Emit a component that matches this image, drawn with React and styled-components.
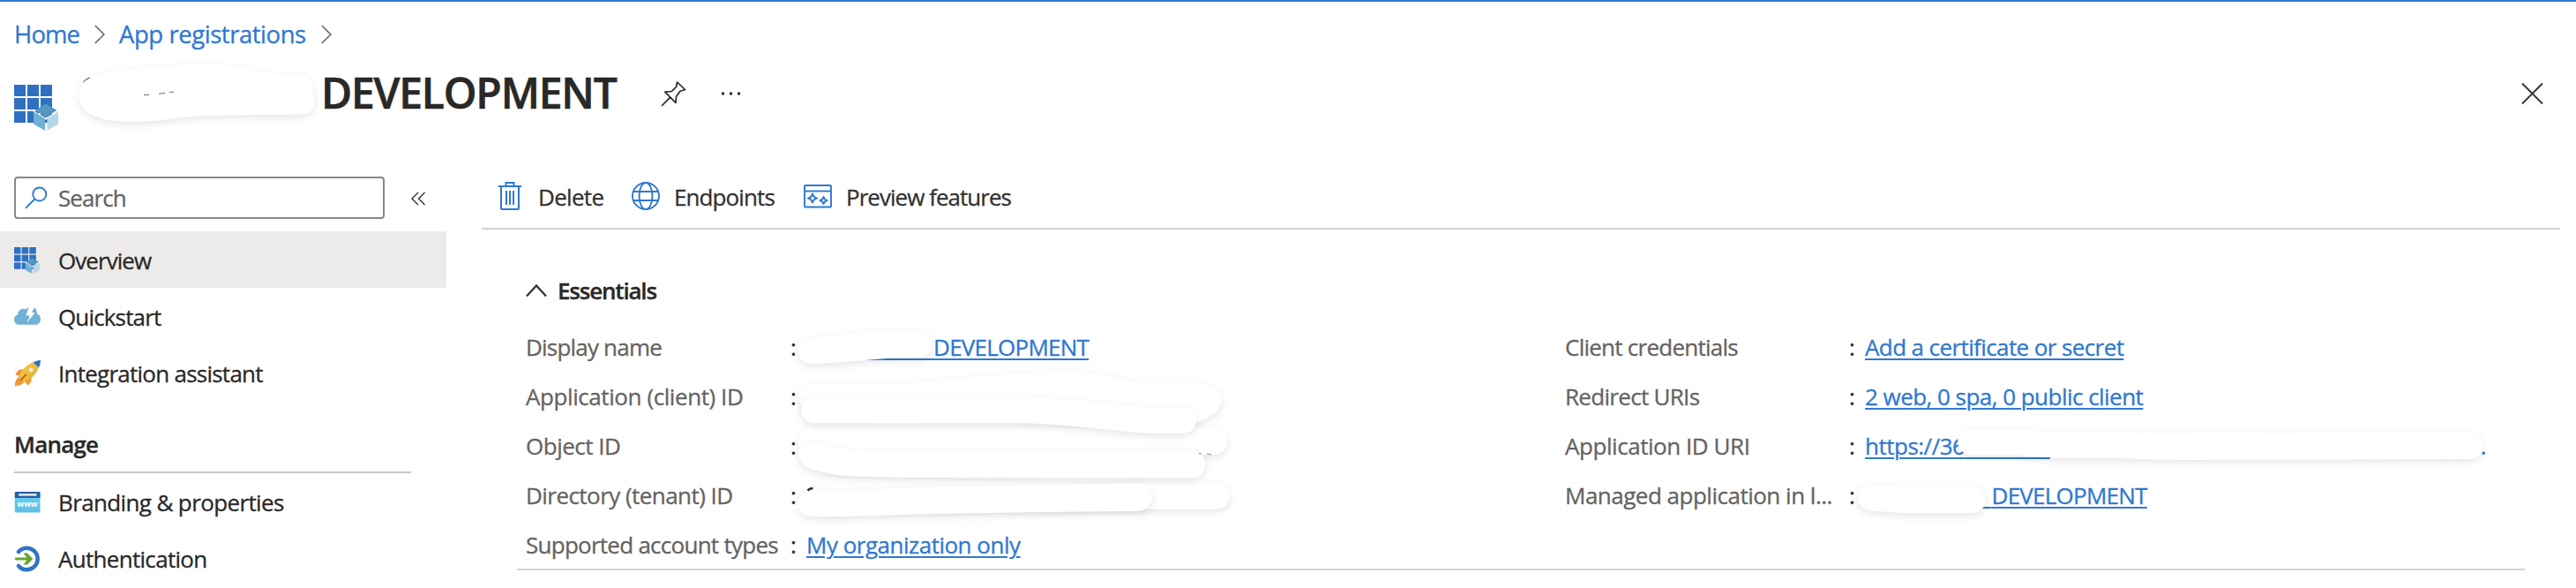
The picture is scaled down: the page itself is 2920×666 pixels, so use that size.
import React from "react";
import styled, { createGlobalStyle } from "styled-components";

const GlobalStyle = createGlobalStyle`
  * { box-sizing: border-box; }
  body {
    margin: 0;
    background: #fff;
    color: #292827;
    font-family: "Open Sans", "Noto Sans", sans-serif;
    font-size: 26px;
    line-height: 36px;
    -webkit-text-stroke: 0.3px currentColor;
  }
  svg { -webkit-text-stroke: 0; }
`;

const BLUE = "#2f78d0";

const Page = styled.div`
  position: relative;
  width: 2920px;
  height: 666px;
  overflow: hidden;
  border-top: 2px solid ${BLUE};
  white-space: nowrap;
`;

const Label = styled.span`
  letter-spacing: ${(p) => p.$ls ?? -0.5}px;
`;

const Breadcrumb = styled.nav`
  display: flex;
  align-items: center;
  height: 70px;
  padding: 4px 0 0 16px;
  color: ${BLUE};
  font-size: 27.5px;
`;

const Crumb = styled.a`
  width: ${(p) => p.$w}px;
  letter-spacing: ${(p) => p.$ls}px;
`;

const CrumbArrow = styled.svg`
  width: 12px;
  height: 22px;
  margin-right: ${(p) => p.$gap ?? 0}px;
`;

const TitleBar = styled.header`
  display: flex;
  height: 128px;
  padding-left: 16px;
`;

const ResourceIcon = styled.svg`
  width: ${(p) => p.$size}px;
  height: ${(p) => p.$size}px;
  margin-top: ${(p) => p.$top ?? 0}px;
`;

const Title = styled.h1`
  width: 337px;
  margin: 0 0 0 296px;
  font-size: 48px;
  line-height: 66px;
  font-weight: 600;
  letter-spacing: ${(p) => p.$ls}px;
  -webkit-text-stroke: 0.6px currentColor;
`;

const TitleAction = styled.svg`
  width: ${(p) => p.$w}px;
  height: 30px;
  margin: 19px 0 0 ${(p) => p.$left}px;
`;

const CloseButton = styled.svg`
  width: 26px;
  height: 26px;
  margin: 21px 37px 0 auto;
`;

const Body = styled.div`
  display: flex;
`;

const Sidebar = styled.aside`
  width: 506px;
  flex: none;
`;

const SearchRow = styled.div`
  display: flex;
  align-items: center;
  height: 48px;
  margin-bottom: 14px;
  padding-left: 16px;
`;

const SearchBox = styled.div`
  display: flex;
  align-items: center;
  width: 420px;
  height: 48px;
  padding-left: 10px;
  border: 2px solid #8a8886;
  border-radius: 4px;
  color: #646362;
  svg { width: 26px; height: 26px; margin-right: 12px; }
`;

const Collapse = styled.svg`
  width: 18px;
  height: 18px;
  margin: 2px 0 0 29px;
`;

const NavItem = styled.div`
  display: flex;
  align-items: center;
  height: 64px;
  padding: 2px 0 0 16px;
  background: ${(p) => (p.$active ? "#edebea" : "transparent")};
  svg { width: 30px; height: 30px; margin: 0 20px 0 0; flex: none; }
`;

const NavHeading = styled.div`
  height: 82px;
  width: 450px;
  margin-left: 16px;
  padding-top: 31px;
  border-bottom: 2px solid #c8c8c8;
  font-weight: 600;
`;

const Content = styled.main`
  width: 2356px;
  margin-left: 40px;
`;

const Toolbar = styled.div`
  display: flex;
  align-items: center;
  height: 60px;
  padding: 0 0 14px 18px;
  border-bottom: 2px solid #d2d2d2;
  color: #323130;
`;

const Command = styled.div`
  display: flex;
  align-items: center;
  width: ${(p) => p.$w}px;
  svg { width: 34px; height: 34px; margin-right: ${(p) => p.$gap}px; flex: none; }
  span { padding-top: 2px; }
`;

const Essentials = styled.section`
  width: 2276px;
  height: 386px;
  margin-left: 40px;
  padding-top: 49px;
  border-bottom: 2px solid #d4d4d4;
`;

const EssentialsHeader = styled.div`
  display: flex;
  align-items: center;
  height: 40px;
  margin-bottom: 16px;
  padding-left: 9px;
  font-weight: 600;
  svg { width: 26px; height: 18px; margin-right: 11px; }
`;

const Columns = styled.div`
  display: grid;
  grid-template-columns: 1178px 1fr;
  padding-left: 10px;
`;

const Row = styled.div`
  display: flex;
  align-items: center;
  height: 56px;
`;

const RowLabel = styled.span`
  width: ${(p) => p.$w}px;
  color: #646362;
  letter-spacing: ${(p) => p.$ls}px;
`;

const Colon = styled.span`
  width: 18px;
`;

const Link = styled.a`
  color: ${BLUE};
  text-decoration: underline;
  text-decoration-thickness: 2px;
  text-underline-offset: 3px;
  letter-spacing: ${(p) => p.$ls}px;
`;

/* A single space stretched so that the underline runs on beneath the ink. */
const Stretch = styled.span`
  word-spacing: ${(p) => p.$w}px;
`;

const LinkTail = styled.span`
  margin-left: ${(p) => p.$gap}px;
  color: ${BLUE};
`;

const Ink = styled.svg`
  position: absolute;
  left: 0;
  top: -2px;
  width: 2920px;
  height: 666px;
  pointer-events: none;
  .stroke { fill: #fff; filter: drop-shadow(0 3px 4px rgba(0, 0, 0, 0.1)); }
`;

const AppRegGlyph = (props) => (
  <ResourceIcon viewBox="0 0 52 52" {...props}>
    <g fill="#2f70c0">
      {[0, 15, 30].map((y) =>
        [0, 15, 30].map((x) => <rect key={`${x}-${y}`} x={x} y={y} width="13" height="13" />)
      )}
    </g>
    <path d="M36 21.500 48.500 29 36 36.500 23.500 29Z" fill="#5498c2" />
    <path d="M22 30.500 36 38.500 50 30.500" fill="none" stroke="#fff" strokeWidth="2" />
    <path d="M22 30.500 35 38V52L22 44.500Z" fill="#70b2d6" />
    <path d="M50 30.500 37.500 38V52L50 44.500Z" fill="#b4d8eb" />
  </ResourceIcon>
);

const CloudGlyph = () => (
  <svg viewBox="0 0 30 30">
    <path d="M5.500 23.800C2 23.800 0 21 0 18.200C0 15 1.800 13 4.200 12.500C4.200 8 7.500 5.600 11 5.800Q12.500 5.900 13.300 6.600C15 4.500 17 3.300 19.500 3.300C23.500 3.300 26 7 26 11.500C28.500 12.200 30 14.700 30 17.500C30 21 27.500 23.800 24.500 23.800Z" fill="#70b2d6" />
    <path d="M17 2.500 13.500 13.500H17.800L14.800 21.500 23.500 10H20L24 2.500Z" fill="#fff" />
  </svg>
);

const RocketGlyph = () => (
  <svg viewBox="0 0 30 30">
    <defs>
      <linearGradient id="fin" x1="0" y1="0" x2="0" y2="1"><stop offset="0" stopColor="#f08b35" /><stop offset="1" stopColor="#eda03c" /></linearGradient>
      <linearGradient id="hull" x1="0" y1="0" x2="1" y2="1"><stop offset="0" stopColor="#f5d04b" /><stop offset="1" stopColor="#e2ac36" /></linearGradient>
    </defs>
    <path d="M11 10.500C7 9.500 3.500 11.500 1.500 16.500L6 18C2 21 1 25 .7 29.500C6 29 9.500 27.500 12 24.500L15.500 28.500C19 26 20.500 23 19.500 19Z" fill="url(#fin)" />
    <path d="M21.500 2.200C14 5 8 11 5 20L10 25C19 22 25 16 28 8.500Z" fill="url(#hull)" />
    <path d="M21.500 2.200C24 1 27 .2 30 0C30 3 29 6 28 8.500Z" fill="#2f70c0" />
    <circle cx="19" cy="11" r="2.700" fill="#f5f1e5" stroke="#e3b13c" strokeWidth=".6" />
    <path d="M13.300 16.500 7.500 22.500" stroke="#c9652a" strokeWidth="1.800" strokeLinecap="round" />
  </svg>
);

const BrowserGlyph = () => (
  <svg viewBox="0 0 30 30">
    <defs>
      <linearGradient id="pane" x1="0" y1="0" x2="0" y2="1"><stop offset="0" stopColor="#66d2f0" /><stop offset="1" stopColor="#5fbfe2" /></linearGradient>
    </defs>
    <rect x=".8" y="3" width="28.700" height="23.600" rx="1.500" fill="url(#pane)" />
    <path d="M.8 10V4.200Q.8 3 2 3H28.300Q29.500 3 29.500 4.200V10Z" fill="#275fa6" />
    <rect x="5" y="5.200" width="20.500" height="2.400" fill="#eef0f2" />
    <text x="15" y="19.600" textAnchor="middle" fontSize="9" fontWeight="700" fill="#fff" textLength="23">www</text>
  </svg>
);

const SignInGlyph = () => (
  <svg viewBox="0 0 30 30" fill="none">
    <path d="M5 7A12.300 12.300 0 1 1 5 23" stroke="#2f74c4" strokeWidth="4.600" strokeLinecap="round" />
    <path d="M2.300 15H17" stroke="#68a22f" strokeWidth="2.900" strokeLinecap="round" />
    <path d="M10.500 8.600H15L21.200 15 15 21.400H10.500L15.500 15Z" fill="#68a22f" />
  </svg>
);

const Chevron = ({ gap }) => (
  <CrumbArrow viewBox="0 0 12 22" $gap={gap}>
    <path d="M.8 1 11 11 .8 21" fill="none" stroke="#605e5c" strokeWidth="1.500" />
  </CrumbArrow>
);

const NAV_TOP = [
  { text: "Overview", icon: <AppRegGlyph $size={30} />, active: true, ls: -0.95 },
  { text: "Quickstart", icon: <CloudGlyph />, ls: -0.85 },
  { text: "Integration assistant", icon: <RocketGlyph />, ls: -0.75 },
];

const NAV_MANAGE = [
  { text: "Branding & properties", icon: <BrowserGlyph />, ls: -0.63 },
  { text: "Authentication", icon: <SignInGlyph />, ls: -0.7 },
];

const LEFT = [
  { label: "Display name", ls: -0.8, value: <Link $ls={-0.75}><Stretch $w={138}>{"\u00a0"}</Stretch>DEVELOPMENT</Link> },
  { label: "Application (client) ID", ls: -0.42 },
  { label: "Object ID", ls: -0.5 },
  { label: "Directory (tenant) ID", ls: -0.55 },
  { label: "Supported account types", ls: -0.74, value: <Link $ls={-0.5}>My organization only</Link> },
];

const RIGHT = [
  { label: "Client credentials", ls: -0.75, value: <Link $ls={-0.6}>Add a certificate or secret</Link> },
  { label: "Redirect URIs", ls: -0.7, value: <Link $ls={-0.53}>2 web, 0 spa, 0 public client</Link> },
  { label: "Application ID URI", ls: -0.45, value: <><Link $ls={-0.5}>https://36<Stretch $w={90}>{"\u00a0"}</Stretch></Link><LinkTail $gap={488}>.</LinkTail></> },
  { label: "Managed application in l...", ls: -0.5, value: <Link $ls={-0.75}><Stretch $w={137.5}>{"\u00a0"}</Stretch>DEVELOPMENT</Link> },
];

const Properties = ({ rows, labelWidth }) => (
  <div>
    {rows.map((r) => (
      <Row key={r.label}>
        <RowLabel $w={labelWidth} $ls={r.ls}>{r.label}</RowLabel>
        <Colon>:</Colon>
        {r.value}
      </Row>
    ))}
  </div>
);

const INK_STROKES = [
  "M89 108C90 92 108 83 130 80C160 78 200 73 230 73C270 71 285 82 310 83L340 83.500C352 84 357 96 354 104C360 112 357 128 344 129.500L230 131C200 133 180 138 150 138C115 138 90 130 89 108Z",
  "M919 382.700C945 381 965 376 994 375.700H1042C1061 376 1061 405 1042 405.500H1012L990 407.200C965 409 945 411.500 919 412C900 411 900 384 919 382.700Z",
  "M923 435.700C970 436 1000 436 1038 433C1090 429 1150 421 1204 421C1240 420 1265 427 1286 433.300H1357C1393 438 1396 465 1356 479L923 466C899 464 900 436 923 435.700Z",
  "M919.600 485.300H1210L1376 484.700C1396 486 1396 514 1376 515.300H920C900 514 900 486 919.600 485.300Z",
  "M923 449.300H1150C1210 449 1270 461 1307 461H1341C1361 462 1361 490 1341 491H1310C1270 490 1210 479.300 1150 479.300H923C903 478 903 450 923 449.300Z",
  "M935 541C990 541 1040 543 1087 544L1176 547H1379C1399 548 1399 576 1379 576.700H935C918 572 918 544 935 541Z",
  "M919.600 500.700C932 501 938 508 959 508.700L1018 510.700H1352C1371 512 1371 540 1352 541H1018L959 539C945 538 930 534 919 531C900 524 900 503 919.600 500.700Z",
  "M919.600 555.700L983 555L1087 550.700L1293 547.700C1311 550 1311 577 1290 579L1176 580C1120 581 1060 582 1018 583C985 585 950 585 919.600 585C900 584 900 557 919.600 555.700Z",
  "M2235 485.700H2283C2305 486 2317 489.500 2337 489.700L2450 490.700L2798 490.300C2818 493 2819 518 2800 520L2466 521L2396 519H2345C2320 519 2310 516 2283 515.700H2235C2214 514 2214 487 2235 485.700Z",
  "M2120 548.700L2160 551.300H2235C2256 553 2256 580 2235 581.300H2160L2120 578.500C2101 576 2101 551 2120 548.700Z",
];

export default function App() {
  return (
    <>
      <GlobalStyle />
      <Page>
        <Breadcrumb>
          <Crumb $w={91} $ls={-0.9}>Home</Crumb>
          <Chevron gap={16} />
          <Crumb $w={229} $ls={-0.45}>App registrations</Crumb>
          <Chevron />
        </Breadcrumb>
        <TitleBar>
          <AppRegGlyph $size={52} $top={24} />
          <Title $ls={-1.2}>DEVELOPMENT</Title>
          <TitleAction viewBox="0 0 30 30" $w={30} $left={48}>
            <path d="M18.700 2 27.500 10.500 22 12.200 17.500 18.500 17 25.500 4.800 13.200 12.200 12.500 17.500 7.500ZM10.800 19.200 1 29" fill="none" stroke="#292827" strokeWidth="1.700" strokeLinejoin="round" />
          </TitleAction>
          <TitleAction viewBox="0 0 24 30" $w={24} $left={37}>
            <g fill="#292827"><circle cx="3.500" cy="15" r="1.700" /><circle cx="12.500" cy="15" r="1.700" /><circle cx="21.500" cy="15" r="1.700" /></g>
          </TitleAction>
          <CloseButton viewBox="0 0 26 26">
            <path d="M2 1.500 25 24.500M25 1.500 2 24.500" stroke="#323130" strokeWidth="1.800" />
          </CloseButton>
        </TitleBar>
        <Body>
          <Sidebar>
            <SearchRow>
              <SearchBox>
                <svg viewBox="0 0 26 26" fill="none" stroke={BLUE} strokeWidth="1.900">
                  <circle cx="16.800" cy="9" r="7.500" /><path d="M11.300 14.500 1 24.800" />
                </svg>
                <Label $ls={-0.95}>Search</Label>
              </SearchBox>
              <Collapse viewBox="0 0 18 18">
                <path d="M9 2 2 9 9 16M16.500 2 9.500 9 16.500 16" fill="none" stroke="#323130" strokeWidth="1.400" />
              </Collapse>
            </SearchRow>
            {NAV_TOP.map((n) => (
              <NavItem key={n.text} $active={n.active}>{n.icon}<Label $ls={n.ls}>{n.text}</Label></NavItem>
            ))}
            <NavHeading><Label $ls={-0.8}>Manage</Label></NavHeading>
            {NAV_MANAGE.map((n) => (
              <NavItem key={n.text}>{n.icon}<Label $ls={n.ls}>{n.text}</Label></NavItem>
            ))}
          </Sidebar>
          <Content>
            <Toolbar>
              <Command $w={151} $gap={12}>
                <svg viewBox="0 0 34 34" fill="none" stroke={BLUE} strokeWidth="2">
                  <path d="M1 6H27M9.500 6V2H18.500V6M4 6V30.500Q4 32 5.500 32H22.500Q24 32 24 30.500V6M10 11V27M14 11V27M18 11V27" />
                </svg>
                <Label $ls={-0.7}>Delete</Label>
              </Command>
              <Command $w={195} $gap={15}>
                <svg viewBox="0 0 34 34" fill="none" stroke={BLUE} strokeWidth="1.900">
                  <circle cx="17" cy="17" r="15" /><ellipse cx="17" cy="17" rx="7.500" ry="15" /><path d="M3 12H31M3 22H31" />
                </svg>
                <Label $ls={-0.9}>Endpoints</Label>
              </Command>
              <Command $w={250} $gap={15}>
                <svg viewBox="0 0 34 34" fill="none" stroke={BLUE} strokeWidth="1.900" strokeLinejoin="round">
                  <rect x="2" y="5" width="30" height="24.500" rx="1" /><path d="M2 11.500H32" />
                  <path d="M11 14.500Q12 18.500 16 19.500Q12 20.500 11 24.500Q10 20.500 6 19.500Q10 18.500 11 14.500ZM23.500 18Q24.300 21.200 27.500 22Q24.300 22.800 23.500 26Q22.700 22.800 19.500 22Q22.700 21.200 23.500 18Z" />
                </svg>
                <Label $ls={-0.97}>Preview features</Label>
              </Command>
            </Toolbar>
            <Essentials>
              <EssentialsHeader>
                <svg viewBox="0 0 26 18"><path d="M2 15.500 13 3.500 24 15.500" fill="none" stroke="#323130" strokeWidth="2.200" /></svg>
                <Label $ls={-1.2}>Essentials</Label>
              </EssentialsHeader>
              <Columns>
                <Properties rows={LEFT} labelWidth={300} />
                <Properties rows={RIGHT} labelWidth={322} />
              </Columns>
            </Essentials>
          </Content>
        </Body>
        <Ink viewBox="0 0 2920 666">
          {INK_STROKES.map((d) => <path key={d} className="stroke" d={d} />)}
          <g fill="none" stroke="#292827" strokeWidth="1.600">
            <path d="M94.500 93Q97 89.500 101.500 88" strokeWidth="1" />
            <path d="M163 107.600 169 107.300M180 106.300 187 105.300M192 104.700 197 104" strokeWidth=".7" />
            <path d="M915.500 555.500Q918 553 921.500 553" strokeWidth="2.600" />
            <path d="M1359 513.500 1362 514M1368 514 1373 515" stroke="#8a8886" strokeWidth="1.200" />
          </g>
        </Ink>
      </Page>
    </>
  );
}
